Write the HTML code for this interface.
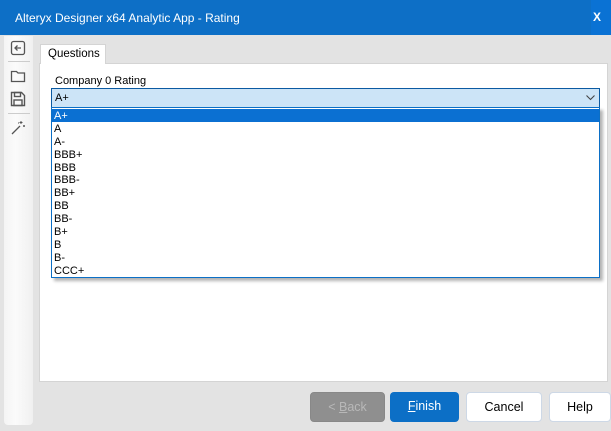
<!DOCTYPE html>
<html><head><style>
*{margin:0;padding:0;box-sizing:border-box}
body{width:611px;height:431px;background:#e3e3e3;font-family:"Segoe UI","Liberation Sans",sans-serif;position:relative;overflow:hidden;font-size:11px;color:#000}
.title{position:absolute;left:0;top:0;width:611px;height:35px;background:#0d6fc6;color:#fff;font-size:12px;padding:11px 0 0 15px}
.close{position:absolute;right:0;top:0;width:20px;height:35px;background:#0a72d4;color:#fff;font-weight:bold;font-size:12px;padding-top:10px;padding-left:2px}
.bar{position:absolute;left:4px;top:36px;width:29px;height:389px;background:linear-gradient(90deg,#f4f4f4,#fbfbfb 40%,#f0f0f0);border-radius:0 0 4px 4px}
.ic{position:absolute;left:6px}
.sep{position:absolute;left:4px;width:22px;height:1px;background:#ccc}
.tab{position:absolute;left:40px;top:44px;width:66px;height:20px;background:#fff;border:1px solid #d4d4d4;border-bottom:none;padding:3px 0 0 7px;font-size:11.5px}
.panel{position:absolute;left:39px;top:63px;width:569px;height:319px;background:#fff;border:1px solid #d4d4d4}
.lbl{position:absolute;left:55px;top:75px;font-size:11px}
.dd{position:absolute;left:51px;top:88px;width:549px;height:20px;background:#cce4f7;border:1px solid #0b5aa2;padding:3px 0 0 3px}
.list{position:absolute;left:51px;top:107px;width:549px;height:171px;background:#fff;border:1px solid #0b6fc6;box-shadow:3px 3px 3px rgba(0,0,0,.3);padding-top:1px}
.list div{height:12.9px;line-height:15px;padding-left:2px}
.list .sel{background:#0b70d2;color:#fff}
.btn{position:absolute;top:392px;height:30px;border-radius:4px;text-align:center;line-height:29px;font-size:12.5px}
</style></head><body>
<div class="title">Alteryx Designer x64 Analytic App - Rating</div>
<div class="close">X</div>
<div class="bar">
<svg class="ic" style="top:4px" width="16" height="16" viewBox="0 0 16 16" fill="none" stroke="#555" stroke-width="1.3"><rect x="1.5" y="1.5" width="13" height="13" rx="2"/><path d="M11 8H5M7.5 5.5L5 8l2.5 2.5"/></svg>
<div class="sep" style="top:25px"></div>
<svg class="ic" style="top:32px" width="16" height="16" viewBox="0 0 16 16" fill="none" stroke="#555" stroke-width="1.3"><path d="M1.5 3.5h5l1.5 1.5h6.5v8.5h-13z"/></svg>
<svg class="ic" style="top:55px" width="16" height="16" viewBox="0 0 16 16" fill="none" stroke="#555" stroke-width="1.4"><path d="M1.5 1.5h10l3 3v10h-13z"/><rect x="4.5" y="1.5" width="6" height="4"/><rect x="4" y="9" width="8" height="5.5"/></svg>
<div class="sep" style="top:77px"></div>
<svg class="ic" style="top:84px" width="16" height="16" viewBox="0 0 16 16" fill="none" stroke="#555" stroke-width="1.3"><path d="M2 14l8-8"/><path d="M11 1v3M9.5 2.5h3M14 5v2M13 6h2M8 3h1" stroke-width="1"/></svg>
</div>
<div class="panel"></div>
<div class="tab">Questions</div>
<div class="lbl">Company 0 Rating</div>
<div class="dd">A+<svg style="position:absolute;right:4px;top:6px" width="9" height="6" viewBox="0 0 9 6" fill="none" stroke="#444" stroke-width="1.1"><path d="M.5.5l4 4 4-4"/></svg></div>
<div class="list">
<div class="sel">A+</div><div>A</div><div>A-</div><div>BBB+</div><div>BBB</div><div>BBB-</div><div>BB+</div><div>BB</div><div>BB-</div><div>B+</div><div>B</div><div>B-</div><div>CCC+</div>
</div>
<div class="btn" style="left:310px;width:75px;background:#8f8f8f;color:#b8b8b8;border:1px solid #888">&lt; <u>B</u>ack</div>
<div class="btn" style="left:390px;width:69px;background:#0c6fc6;color:#fff"><u>F</u>inish</div>
<div class="btn" style="left:466px;width:76px;background:#fff;border:1px solid #cdd8e6">Cancel</div>
<div class="btn" style="left:549px;width:62px;background:#fff;border:1px solid #cdd8e6">Help</div>
</body></html>
